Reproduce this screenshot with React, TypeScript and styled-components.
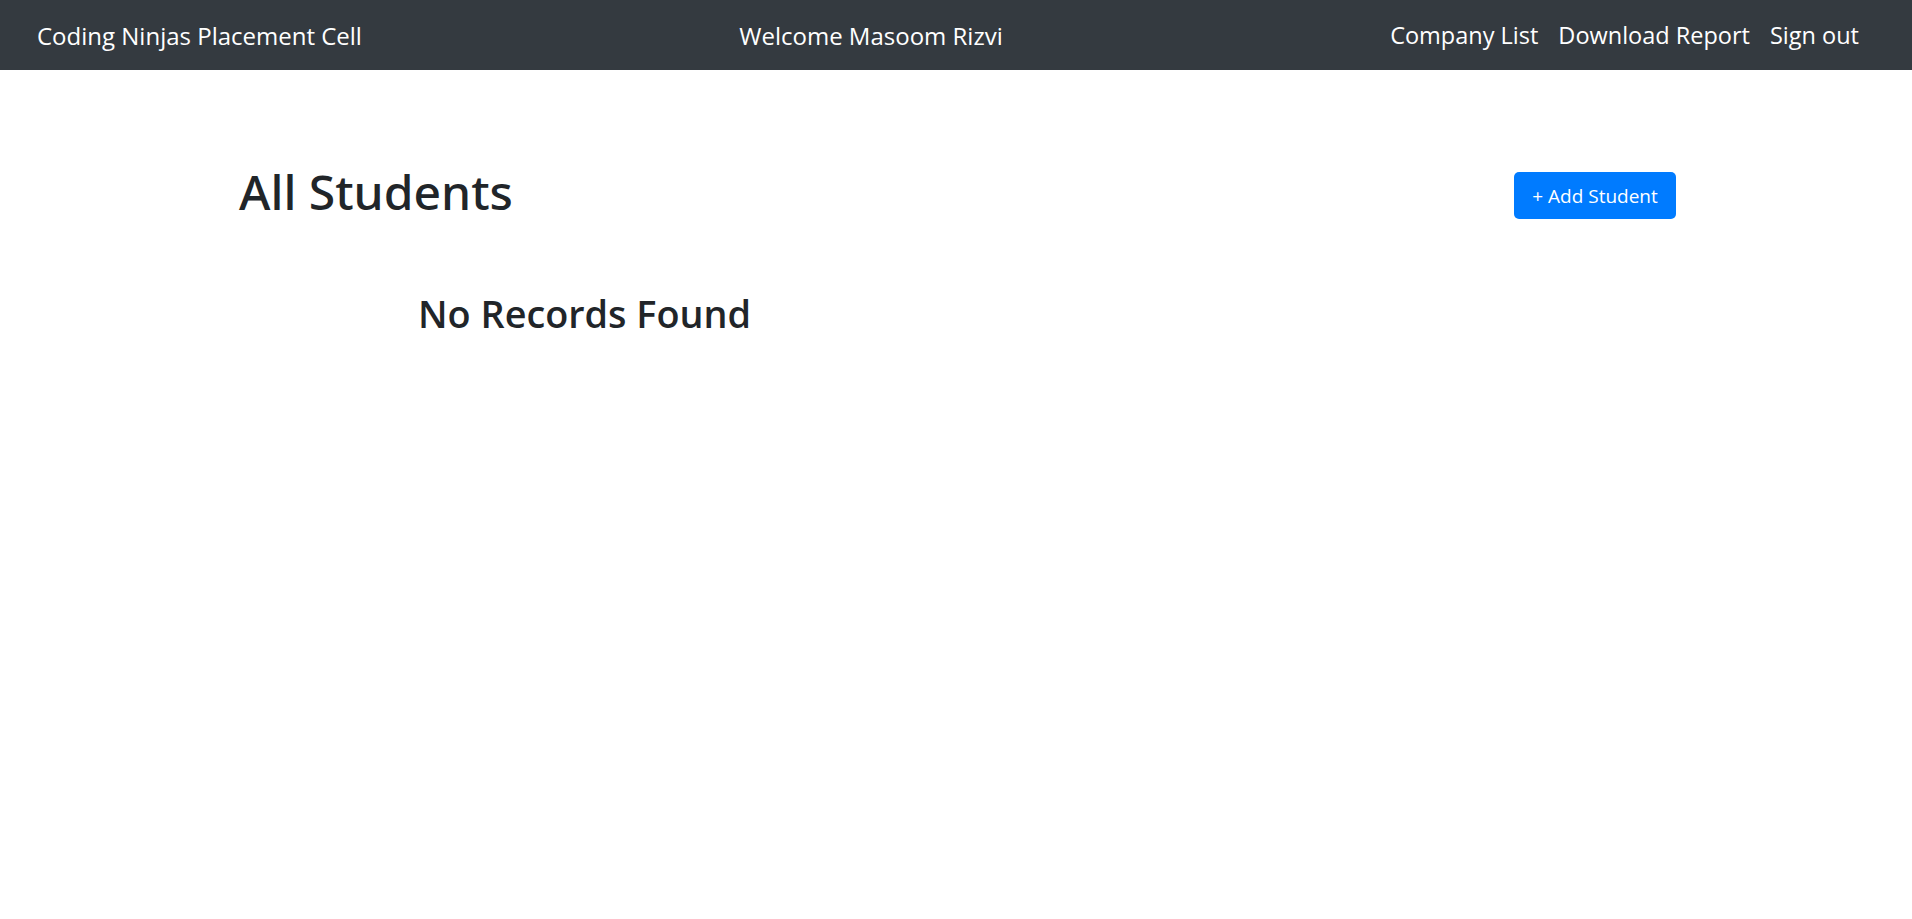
import React from 'react';
import styled, { createGlobalStyle } from 'styled-components';

const GlobalStyle = createGlobalStyle`
  * {
    box-sizing: border-box;
  }
  body {
    margin: 0;
    background: #fff;
    color: #212529;
    font-family: 'Open Sans', 'Noto Sans', sans-serif;
  }
`;

const Navbar = styled.nav`
  height: 70px;
  background-color: #343a40;
  display: flex;
  align-items: center;
  justify-content: space-between;
  padding: 0 43px 0 37px;
`;

const Brand = styled.a`
  color: #fff;
  font-size: 24px;
  text-decoration: none;
  white-space: nowrap;
`;

const Welcome = styled.span`
  color: #fff;
  font-size: 24px;
  white-space: nowrap;
`;

const NavLinks = styled.ul`
  display: flex;
  list-style: none;
  margin: 0;
  padding: 0;
`;

const NavLink = styled.a`
  display: block;
  color: #fff;
  font-size: 23.5px;
  padding: 0 10px;
  text-decoration: none;
  white-space: nowrap;
`;

const Container = styled.main`
  width: 1440px;
  margin: 0 auto;
  padding-left: 3px;
`;

const HeaderRow = styled.div`
  display: flex;
  justify-content: space-between;
  align-items: flex-start;
  margin-top: 93px;
`;

const Title = styled.h1`
  margin: 0;
  font-family: 'Noto Sans', 'Open Sans', sans-serif;
  font-size: 48px;
  font-weight: 500;
  line-height: 1.2;
`;

const AddButton = styled.button`
  margin-top: 9px;
  height: 47px;
  width: 162px;
  border: 0;
  border-radius: 5px;
  background-color: #007bff;
  color: #fff;
  font-family: inherit;
  font-size: 19px;
  cursor: pointer;
`;

const EmptyMessage = styled.h2`
  margin: 70px 0 0 179px;
  font-size: 37.8px;
  font-weight: 600;
  line-height: 1.2;
`;

const App: React.FC = () => {
  return (
    <>
      <GlobalStyle />
      <Navbar>
        <Brand href="#">Coding Ninjas Placement Cell</Brand>
        <Welcome>Welcome Masoom Rizvi</Welcome>
        <NavLinks>
          <li>
            <NavLink href="#">Company List</NavLink>
          </li>
          <li>
            <NavLink href="#">Download Report</NavLink>
          </li>
          <li>
            <NavLink href="#">Sign out</NavLink>
          </li>
        </NavLinks>
      </Navbar>
      <Container>
        <HeaderRow>
          <Title>All Students</Title>
          <AddButton>+ Add Student</AddButton>
        </HeaderRow>
        <EmptyMessage>No Records Found</EmptyMessage>
      </Container>
    </>
  );
};

export default App;
